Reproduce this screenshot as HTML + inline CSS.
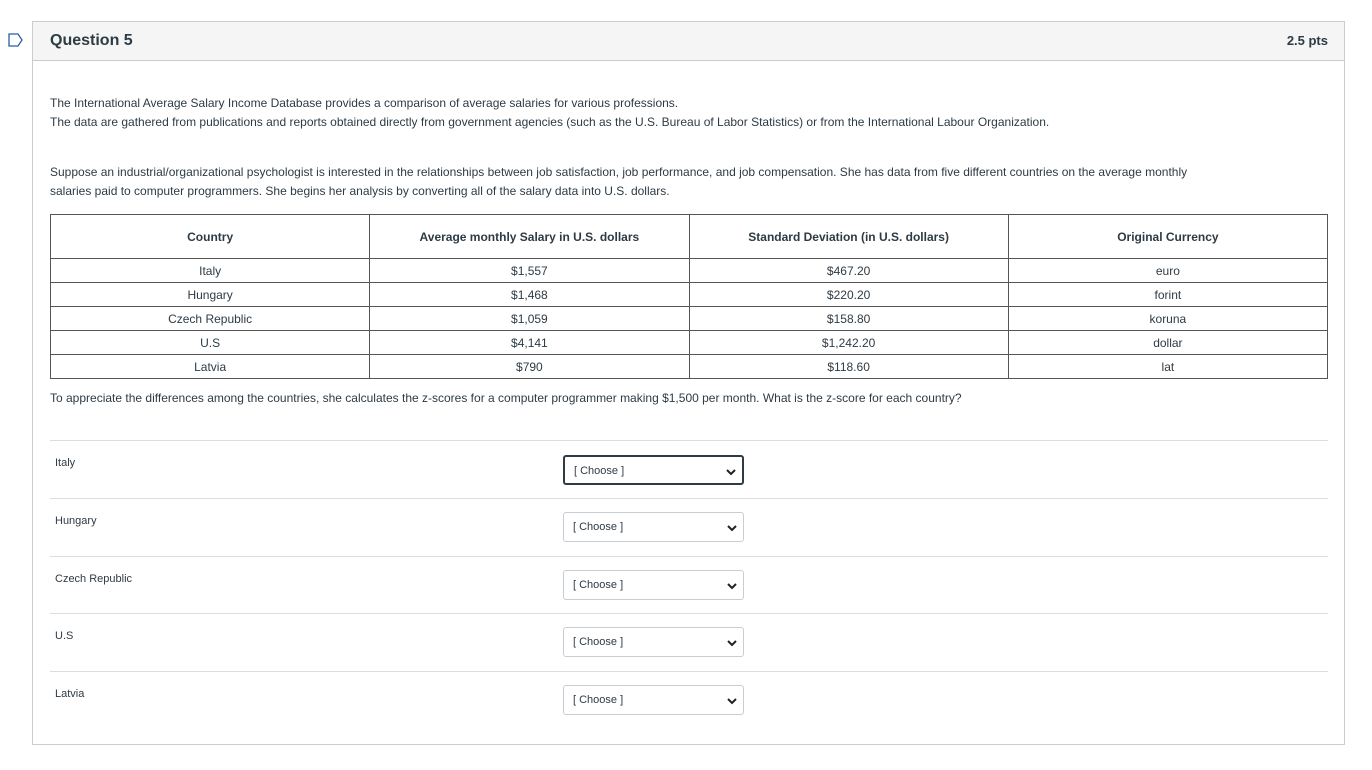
<!DOCTYPE html>
<html><head><style>
body{margin:0;background:#fff;font-family:"Liberation Sans",sans-serif;color:#2d3b45;width:1372px;height:770px;position:relative;overflow:hidden}
.card{position:absolute;left:32px;top:21px;width:1311px;height:722px;border:1px solid #c7cdd1}
.hdr{height:38px;background:#f5f5f5;border-bottom:1px solid #c7cdd1;position:relative}
.hdr .t{position:absolute;left:17px;top:10px;font-size:16px;font-weight:bold}
.hdr .p{position:absolute;right:16px;top:11px;font-size:13px;font-weight:bold}
.txt{position:absolute;left:17px;font-size:12px;line-height:19px;width:1270px}
table{position:absolute;left:17px;top:192px;width:1278px;border-collapse:collapse;font-size:12px;table-layout:fixed}
td,th{border:1px solid #555;text-align:center;padding:0;height:23px}
th{height:43px;font-weight:bold}
.row{position:absolute;left:17px;width:1278px;border-top:1px solid #ddd;font-size:11px}
.row .l{position:absolute;left:5px;top:16px}
.sel{position:absolute;left:513px;width:181px;height:30px;border:1px solid #c7cdd1;border-radius:3px;box-sizing:border-box;font-size:11px}
.sel span{position:absolute;left:9px;top:8px}
.sel svg{position:absolute;right:6px;top:11px}
.foc{border:2px solid #2d3b45}
</style></head><body>
<svg style="position:absolute;left:8px;top:33px" width="16" height="14"><path d="M1 1H10L14 7L10 13H1Z" fill="none" stroke="#2d5fa0" stroke-width="1.3"/></svg>
<div class="card">
<div class="hdr"><div class="t">Question 5</div><div class="p">2.5 pts</div></div>
<div class="txt" style="top:72px">The International Average Salary Income Database provides a comparison of average salaries for various professions.<br>The data are gathered from publications and reports obtained directly from government agencies (such as the U.S. Bureau of Labor Statistics) or from the International Labour Organization.</div>
<div class="txt" style="top:141px">Suppose an industrial/organizational psychologist is interested in the relationships between job satisfaction, job performance, and job compensation. She has data from five different countries on the average monthly<br>salaries paid to computer programmers. She begins her analysis by converting all of the salary data into U.S. dollars.</div>
<table>
<tr><th>Country</th><th>Average monthly Salary in U.S. dollars</th><th>Standard Deviation (in U.S. dollars)</th><th>Original Currency</th></tr>
<tr><td>Italy</td><td>$1,557</td><td>$467.20</td><td>euro</td></tr>
<tr><td>Hungary</td><td>$1,468</td><td>$220.20</td><td>forint</td></tr>
<tr><td>Czech Republic</td><td>$1,059</td><td>$158.80</td><td>koruna</td></tr>
<tr><td>U.S</td><td>$4,141</td><td>$1,242.20</td><td>dollar</td></tr>
<tr><td>Latvia</td><td>$790</td><td>$118.60</td><td>lat</td></tr>
</table>
<div class="txt" style="top:367px">To appreciate the differences among the countries, she calculates the z-scores for a computer programmer making $1,500 per month. What is the z-score for each country?</div>
<div class="row" style="top:418px;height:58px"><div class="l">Italy</div><div class="sel foc" style="top:14px"><span>[ Choose ]</span><svg width="10" height="8"><path d="M1 2L5 6L9 2" fill="none" stroke="#222" stroke-width="2"/></svg></div></div>
<div class="row" style="top:476px;height:58px"><div class="l">Hungary</div><div class="sel" style="top:13px"><span>[ Choose ]</span><svg width="10" height="8"><path d="M1 2L5 6L9 2" fill="none" stroke="#222" stroke-width="2"/></svg></div></div>
<div class="row" style="top:534px;height:57px"><div class="l">Czech Republic</div><div class="sel" style="top:13px"><span>[ Choose ]</span><svg width="10" height="8"><path d="M1 2L5 6L9 2" fill="none" stroke="#222" stroke-width="2"/></svg></div></div>
<div class="row" style="top:591px;height:58px"><div class="l">U.S</div><div class="sel" style="top:13px"><span>[ Choose ]</span><svg width="10" height="8"><path d="M1 2L5 6L9 2" fill="none" stroke="#222" stroke-width="2"/></svg></div></div>
<div class="row" style="top:649px;height:58px"><div class="l">Latvia</div><div class="sel" style="top:13px"><span>[ Choose ]</span><svg width="10" height="8"><path d="M1 2L5 6L9 2" fill="none" stroke="#222" stroke-width="2"/></svg></div></div>
</div>
</body></html>
